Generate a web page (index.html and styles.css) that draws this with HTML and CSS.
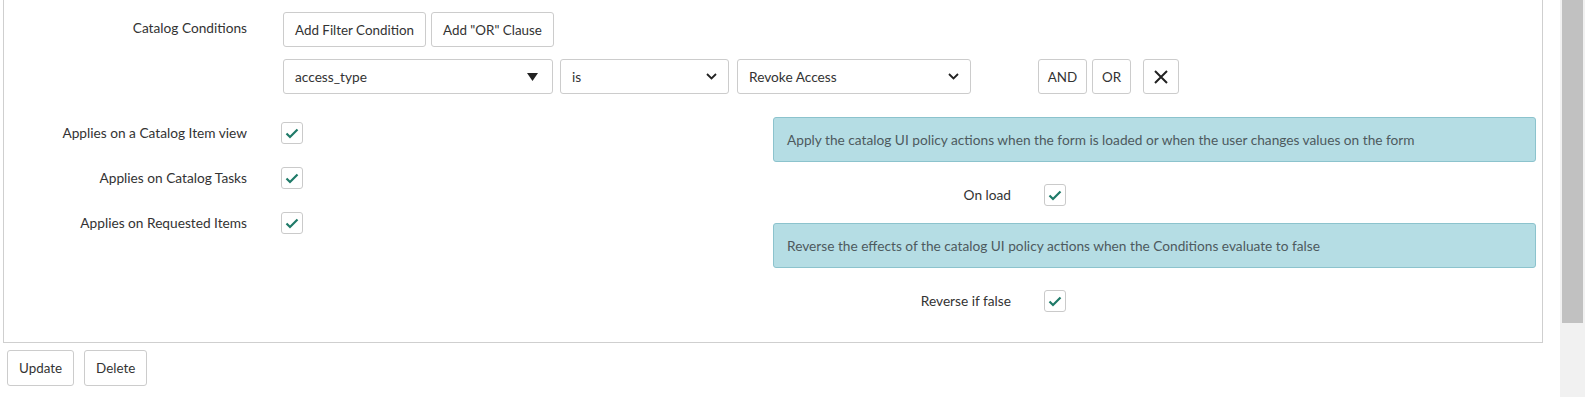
FILE: index.html
```html
<!DOCTYPE html>
<html lang="en">
  <head>
    <meta charset="UTF-8" />
    <meta name="viewport" content="width=device-width, initial-scale=1.0" />
    <title>Catalog UI Policy</title>
    <link rel="stylesheet" href="styles.css">
  </head>
  <body>
    <div class="page">
      <!-- Form Panel -->
      <div class="panel">
        <div class="conditions">
          <p class="label">Catalog Conditions</p>
          <div class="field">
            <div class="btn-group">
              <button class="btn">Add Filter Condition</button>
              <button class="btn">Add "OR" Clause</button>
            </div>
            <div class="condition">
              <div class="select select-field">
                <span>access_type</span>
                <svg width="11" height="8" viewBox="0 0 11 8"><polygon points="0,0 11,0 5.5,8" fill="#222" /></svg>
              </div>
              <div class="select select-op">
                <span>is</span>
                <svg width="11" height="7" viewBox="0 0 11 7"><polyline points="1,1 5.5,5.5 10,1" fill="none" stroke="#222" stroke-width="1.8" /></svg>
              </div>
              <div class="select select-value">
                <span>Revoke Access</span>
                <svg width="11" height="7" viewBox="0 0 11 7"><polyline points="1,1 5.5,5.5 10,1" fill="none" stroke="#222" stroke-width="1.8" /></svg>
              </div>
              <div class="cond-actions">
                <button class="btn btn-and">AND</button>
                <button class="btn btn-or">OR</button>
                <button class="btn btn-remove">
                  <svg width="14" height="14" viewBox="0 0 14 14"><path d="M1 1 L13 13 M13 1 L1 13" stroke="#222" stroke-width="2" /></svg>
                </button>
              </div>
            </div>
          </div>
        </div>

        <div class="columns">
          <div class="col col-left">
            <div class="check-row">
              <p class="label">Applies on a Catalog Item view</p>
              <span class="checkbox"><svg width="14" height="11" viewBox="0 0 14 11"><polyline points="1.5,5.5 5,9 12.5,1.5" fill="none" stroke="#1f7a68" stroke-width="2.2" /></svg></span>
            </div>
            <div class="check-row">
              <p class="label">Applies on Catalog Tasks</p>
              <span class="checkbox"><svg width="14" height="11" viewBox="0 0 14 11"><polyline points="1.5,5.5 5,9 12.5,1.5" fill="none" stroke="#1f7a68" stroke-width="2.2" /></svg></span>
            </div>
            <div class="check-row">
              <p class="label">Applies on Requested Items</p>
              <span class="checkbox"><svg width="14" height="11" viewBox="0 0 14 11"><polyline points="1.5,5.5 5,9 12.5,1.5" fill="none" stroke="#1f7a68" stroke-width="2.2" /></svg></span>
            </div>
          </div>
          <div class="col col-right">
            <div class="info">Apply the catalog UI policy actions when the form is loaded or when the user changes values on the form</div>
            <div class="check-row">
              <p class="label">On load</p>
              <span class="checkbox"><svg width="14" height="11" viewBox="0 0 14 11"><polyline points="1.5,5.5 5,9 12.5,1.5" fill="none" stroke="#1f7a68" stroke-width="2.2" /></svg></span>
            </div>
            <div class="info">Reverse the effects of the catalog UI policy actions when the Conditions evaluate to false</div>
            <div class="check-row">
              <p class="label">Reverse if false</p>
              <span class="checkbox"><svg width="14" height="11" viewBox="0 0 14 11"><polyline points="1.5,5.5 5,9 12.5,1.5" fill="none" stroke="#1f7a68" stroke-width="2.2" /></svg></span>
            </div>
          </div>
        </div>
      </div>

      <!-- Form Buttons -->
      <div class="actions">
        <button class="btn">Update</button>
        <button class="btn">Delete</button>
      </div>
    </div>

    <div class="scrollbar"><div class="thumb"></div></div>
  </body>
</html>
```

FILE: styles.css
```css
* {
  box-sizing: border-box;
}
html,
body {
  margin: 0;
  height: 397px;
  overflow: hidden;
}
body {
  display: flex;
  background-color: #fff;
  font-family: Lato, "Open Sans", sans-serif;
  font-size: 13.7px;
  color: #333;
}
.page {
  flex: 1;
}
p {
  margin: 0;
}
.panel {
  margin-left: 3px;
  width: 1540px;
  height: 343px;
  border: 1px solid #cfcfcf;
  border-top: none;
  padding: 12px 6px 0 0;
}
.label {
  text-align: right;
  line-height: 20px;
}
.conditions {
  display: grid;
  grid-template-columns: 243px 1fr;
  column-gap: 36px;
}
.conditions > .label {
  padding-top: 6px;
}
.btn-group {
  display: flex;
  gap: 5px;
}
.btn {
  height: 35px;
  padding: 0 11px;
  background-color: #fff;
  border: 1px solid #ccc;
  border-radius: 3px;
  font-family: inherit;
  font-size: 13.4px;
  color: #333;
}
.condition {
  display: flex;
  margin-top: 12px;
}
.select {
  display: flex;
  align-items: center;
  justify-content: space-between;
  height: 35px;
  padding: 0 11px;
  border: 1px solid #ccc;
  border-radius: 3px;
}
.select-field {
  width: 270px;
  padding-right: 14px;
}
.select-op {
  width: 169px;
  margin-left: 7px;
}
.select-value {
  width: 234px;
  margin-left: 8px;
}
.cond-actions {
  display: flex;
  margin-left: 67px;
}
.btn-and {
  width: 49px;
  padding: 0;
}
.btn-or {
  width: 39px;
  padding: 0;
  margin-left: 5px;
}
.btn-remove {
  width: 36px;
  padding: 0;
  margin-left: 12px;
  display: flex;
  align-items: center;
  justify-content: center;
}
.columns {
  display: grid;
  grid-template-columns: 769px 1fr;
  margin-top: 23px;
}
.col-left {
  display: flex;
  flex-direction: column;
  gap: 23px;
  padding-top: 5px;
}
.check-row {
  display: grid;
  grid-template-columns: 243px 22px;
  column-gap: 34px;
  align-items: center;
}
.col-right .check-row {
  grid-template-columns: 238px 22px;
  column-gap: 33px;
  margin: 22px 0 17px;
}
.checkbox {
  display: flex;
  align-items: center;
  justify-content: center;
  width: 22px;
  height: 22px;
  border: 1px solid #cacaca;
  border-radius: 3px;
  background-color: #fff;
}
.info {
  height: 45px;
  padding: 0 13px;
  display: flex;
  align-items: center;
  background-color: #b5dde4;
  border: 1px solid #8cc3cd;
  border-radius: 3px;
  color: #4d5a5e;
}
.actions {
  display: flex;
  gap: 10px;
  margin: 7px 0 0 7px;
}
.actions .btn {
  height: 36px;
}
.scrollbar {
  width: 25px;
  height: 397px;
  padding: 0 2px;
  background-color: #f1f1f1;
}
.thumb {
  height: 323px;
  background-color: #c1c1c1;
}
```
